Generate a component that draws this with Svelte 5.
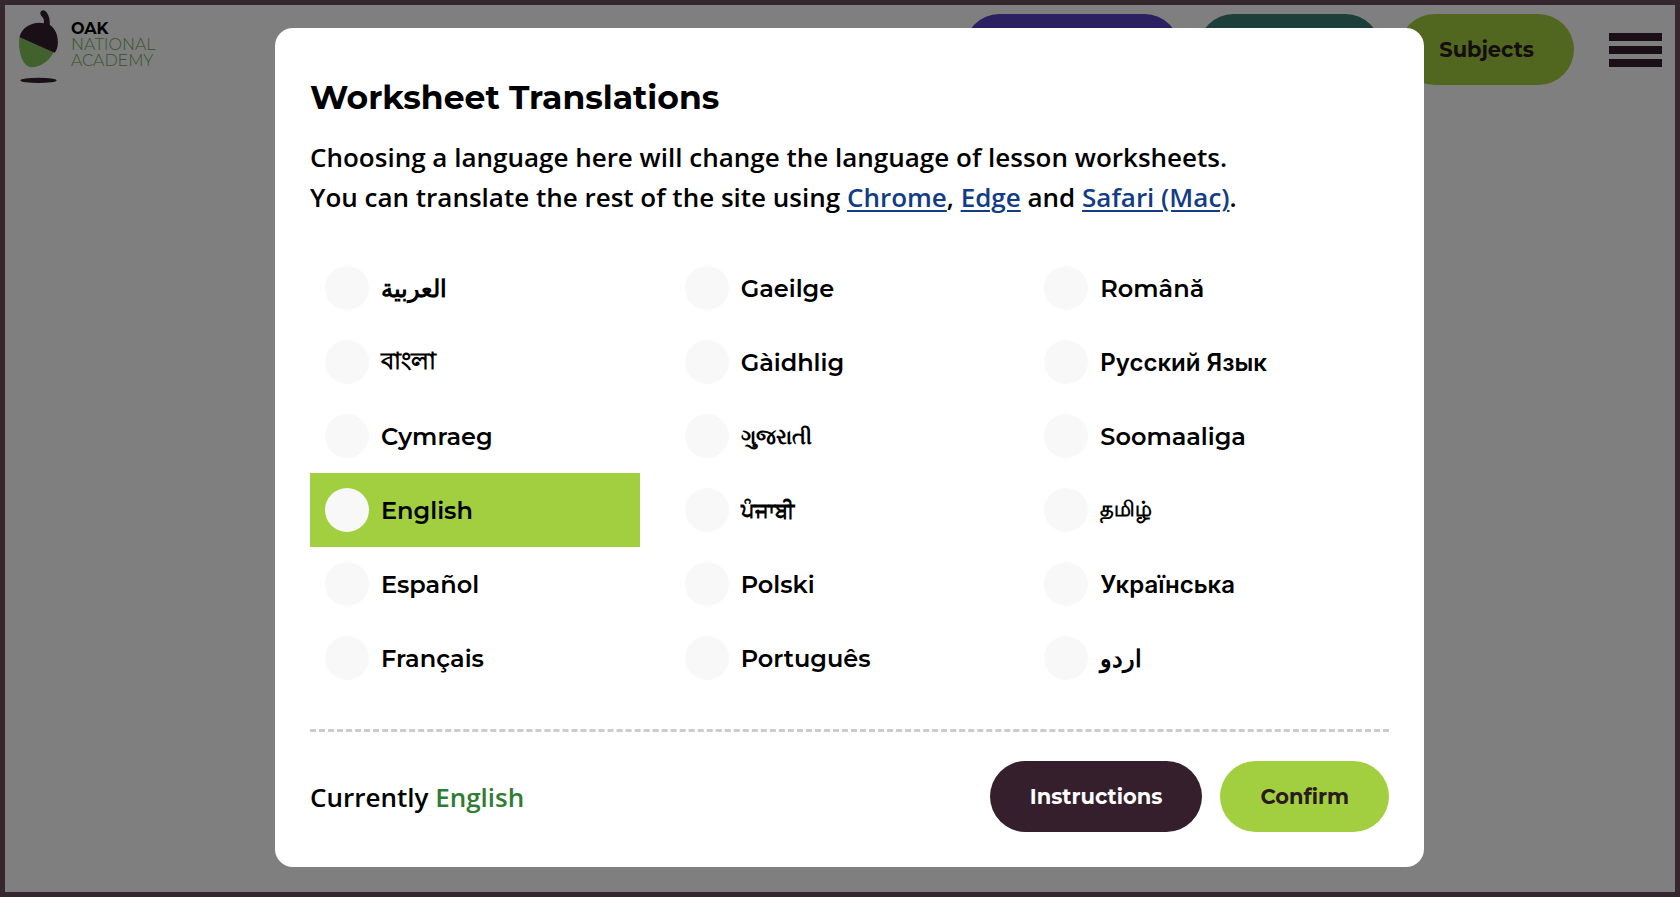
<script>
	const columns = [
		['العربية', 'বাংলা', 'Cymraeg', 'English', 'Español', 'Français'],
		['Gaeilge', 'Gàidhlig', 'ગુજરાતી', 'ਪੰਜਾਬੀ', 'Polski', 'Português'],
		['Română', 'Русский Язык', 'Soomaaliga', 'தமிழ்', 'Українська', 'اردو']
	];

	const cyrillic = /[\u0400-\u04ff]/;
	const indic = /[\u0a00-\u0bff]/;

	let selected = $state('English');
	let current = $state('English');
</script>

<div class="page">
	<header>
		<a class="logo" href="/" aria-label="Oak National Academy">
			<svg viewBox="54 24 122 228" aria-hidden="true">
				<path fill="#82c45a" d="M57 111 L161 155 C149 179 126 200 96 201 C64 201 52 148 57 111 Z" />
				<path
					fill="#351f2c"
					d="M57 110 C64 82 90 66 118 66 L131 67 C133 58 131 52 124 45 C117 37 122 27 131 28 C144 33 151 54 149 72 C167 84 174 104 174 126 C174 140 170 151 164 157 Z"
				/>
				<ellipse fill="#351f2c" cx="115" cy="241" rx="55" ry="8" />
			</svg>
			<span class="logo-text"><b>OAK</b><span>NATIONAL</span><span>ACADEMY</span></span>
		</a>
		<nav>
			<button class="search" aria-label="Search">
				<svg viewBox="0 0 40 40" aria-hidden="true">
					<circle cx="17" cy="17" r="13" fill="none" stroke="#351f2c" stroke-width="4" />
					<path d="M27 27 L37 37" stroke="#351f2c" stroke-width="4" />
				</svg>
			</button>
			<button class="pill purple" aria-label="Experiments"></button>
			<button class="pill teal" aria-label="Teachers"></button>
			<button class="pill green">Subjects</button>
			<button class="menu" aria-label="Menu">
				<span></span>
				<span></span>
				<span></span>
			</button>
		</nav>
	</header>

	<div class="overlay">
		<div class="modal" role="dialog" aria-modal="true" aria-labelledby="modal-title">
			<h1 id="modal-title">Worksheet Translations</h1>
			<p class="intro">
				Choosing a language here will change the language of lesson worksheets.<br />
				You can translate the rest of the site using <a href="#chrome">Chrome</a>,
				<a href="#edge">Edge</a> and <a href="#safari">Safari (Mac)</a>.
			</p>

			<div class="languages" role="radiogroup" aria-labelledby="modal-title">
				{#each columns as column}
					<div class="column">
						{#each column as language}
							<label
								class:selected={language === selected}
								class:cyrillic={cyrillic.test(language)}
								class:indic={indic.test(language)}
							>
								<input type="radio" name="language" value={language} bind:group={selected} />
								<span>{language}</span>
							</label>
						{/each}
					</div>
				{/each}
			</div>

			<footer>
				<p>Currently <span class="current">{current}</span></p>
				<div class="actions">
					<button class="pill dark">Instructions</button>
					<button class="pill green" onclick={() => (current = selected)}>Confirm</button>
				</div>
			</footer>
		</div>
	</div>
</div>

<style>
	:global(body) {
		margin: 0;
		background: #fff;
	}

	.page {
		position: relative;
		box-sizing: border-box;
		min-height: 100vh;
		border: 5px solid #34272d;
		color: #000;
		font-family: Montserrat, Inter, 'Noto Sans', sans-serif;
	}

	header {
		display: flex;
		justify-content: space-between;
		padding: 4px 13px 0;
	}

	.logo {
		display: flex;
		gap: 12px;
		text-decoration: none;
	}

	.logo svg {
		width: 41px;
		height: 75px;
	}

	.logo-text {
		display: flex;
		flex-direction: column;
		padding-top: 12px;
		font-size: 16px;
		line-height: 16px;
		font-weight: 300;
		color: #6aa84f;
	}

	.logo-text b {
		font-weight: 700;
		color: #000;
	}

	nav {
		display: flex;
		align-items: center;
		gap: 18px;
		height: 71px;
		padding-top: 5px;
	}

	button {
		border: 0;
		padding: 0;
		background: none;
		font-family: inherit;
		cursor: pointer;
	}

	.search {
		width: 40px;
		height: 40px;
		margin-right: 16px;
	}

	.pill {
		height: 71px;
		padding: 0 40px;
		border-radius: 36px;
		font-size: 21px;
		font-weight: 700;
		color: #2b1a20;
	}

	.purple {
		width: 216px;
		background: #5642c0;
	}

	.teal {
		width: 183px;
		background: #3a7e78;
	}

	.green {
		background: #a2cf3f;
	}

	.dark {
		background: #351f2c;
		color: #fff;
	}

	.menu {
		display: flex;
		flex-direction: column;
		gap: 5px;
		width: 53px;
		margin-left: 17px;
	}

	.menu span {
		height: 8px;
		background: #351f2c;
	}

	.overlay {
		position: absolute;
		inset: 0;
		display: flex;
		justify-content: center;
		align-items: flex-start;
		padding: 23px 0 25px 19px;
		background: rgba(0, 0, 0, 0.5);
	}

	.modal {
		box-sizing: border-box;
		width: 100%;
		max-width: 1149px;
		padding: 49px 35px 35px;
		border-radius: 18px;
		background: #fff;
	}

	h1 {
		margin: 0;
		font-size: 33px;
		line-height: 40px;
		font-weight: 700;
	}

	p {
		margin: 0;
		font-family: 'Open Sans', sans-serif;
		font-size: 26px;
		line-height: 40px;
		font-weight: 600;
	}

	.intro {
		margin-top: 20px;
	}

	.intro a {
		color: #123c85;
		text-decoration-thickness: 2px;
		text-underline-offset: 3px;
	}

	.languages {
		display: grid;
		grid-template-columns: repeat(3, 1fr);
		margin: 34px 0;
	}

	.column {
		padding-right: 30px;
	}

	label {
		display: flex;
		align-items: center;
		gap: 12px;
		height: 74px;
		padding-left: 15px;
		font-size: 24px;
		font-weight: 600;
		cursor: pointer;
	}

	label.selected {
		background: #a2cf3f;
	}

	label.cyrillic {
		font-family: Inter, sans-serif;
	}

	label.indic {
		font-size: 21px;
	}

	input {
		appearance: none;
		width: 44px;
		height: 44px;
		margin: 0;
		border-radius: 50%;
		background: #f8f8f8;
	}

	footer {
		display: flex;
		justify-content: space-between;
		align-items: center;
		padding-top: 29px;
		border-top: 3px dashed #ccc;
	}

	.current {
		color: #2f7d32;
	}

	.actions {
		display: flex;
		gap: 18px;
	}
</style>
